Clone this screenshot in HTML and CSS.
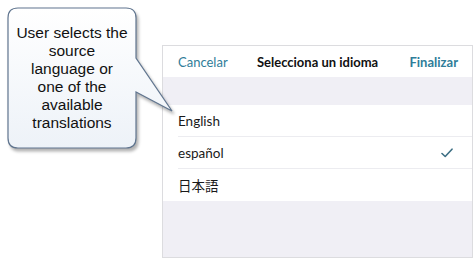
FILE: index.html
```html
<!DOCTYPE html>
<html lang="es">
<head>
    <meta charset="UTF-8">
    <title>Selecciona un idioma</title>
    <link rel="stylesheet" href="styles.css">
</head>
<body>
    <div class="stage">
        <div class="panel">
            <div class="header">
                <span class="link">Cancelar</span>
                <span class="title">Selecciona un idioma</span>
                <span class="link bold">Finalizar</span>
            </div>
            <div class="gap"></div>
            <div class="list">
                <div class="row">English</div>
                <div class="row">español
                    <svg class="check" width="12" height="10" viewBox="0 0 12 10">
                        <path d="M1 5.5 L4.2 8.5 L11 1.2" fill="none" stroke="#3d6f84" stroke-width="1.6" stroke-linecap="round" stroke-linejoin="round"/>
                    </svg>
                </div>
                <div class="row">日本語</div>
            </div>
        </div>

        <svg class="bubble" width="180" height="160" viewBox="0 0 180 160">
            <defs>
                <linearGradient id="bg" x1="0" y1="0" x2="0" y2="1">
                    <stop offset="0" stop-color="#ffffff"/>
                    <stop offset="1" stop-color="#edf2f8"/>
                </linearGradient>
            </defs>
            <path d="M18,8 H126 Q136,8 136,18 V58 L172,111 L136,92 V138 Q136,148 126,148 H18 Q8,148 8,138 V18 Q8,8 18,8 Z"
                  fill="url(#bg)" stroke="#60758f" stroke-width="1.2"/>
        </svg>
        <div class="bubble-text">User selects the<br>source<br>language or<br>one of the<br>available<br>translations</div>
    </div>
</body>
</html>
```

FILE: styles.css
```css
body {
    margin: 0;
    background: #fff;
    font-family: Lato, "Noto Sans", "Noto Sans CJK JP", sans-serif;
}
.stage {
    position: relative;
    width: 474px;
    height: 260px;
    padding: 45px 0 0 162px;
    box-sizing: border-box;
}
.panel {
    width: 311px;
    height: 213px;
    box-sizing: border-box;
    border: 1px solid #dcdcdf;
    background: #f0eff5;
    display: flex;
    flex-direction: column;
}
.header {
    height: 31px;
    background: #fff;
    display: flex;
    justify-content: space-between;
    align-items: center;
    padding: 0 14px 0 15px;
    font-size: 13px;
}
.link {
    color: #2f7d99;
}
.bold {
    font-weight: bold;
}
.title {
    font-weight: bold;
    color: #111;
    margin-right: 2px;
}
.gap {
    height: 28px;
}
.list {
    background: #fff;
    padding-left: 15px;
}
.row {
    height: 31px;
    border-bottom: 1px solid #ececf0;
    display: flex;
    align-items: center;
    justify-content: space-between;
    padding-right: 19px;
    font-size: 13.5px;
    color: #1a1a1a;
}
.row:last-child {
    border-bottom: none;
    height: 32px;
}
.bubble {
    position: absolute;
    left: 0;
    top: 0;
    filter: drop-shadow(2px 3px 1.5px rgba(0,0,0,0.3));
}
.bubble-text {
    position: absolute;
    left: 8px;
    top: 8px;
    width: 128px;
    height: 140px;
    display: flex;
    align-items: center;
    justify-content: center;
    text-align: center;
    font-family: "Liberation Sans", Arial, sans-serif;
    font-size: 15.5px;
    line-height: 18px;
    color: #111;
}
```
